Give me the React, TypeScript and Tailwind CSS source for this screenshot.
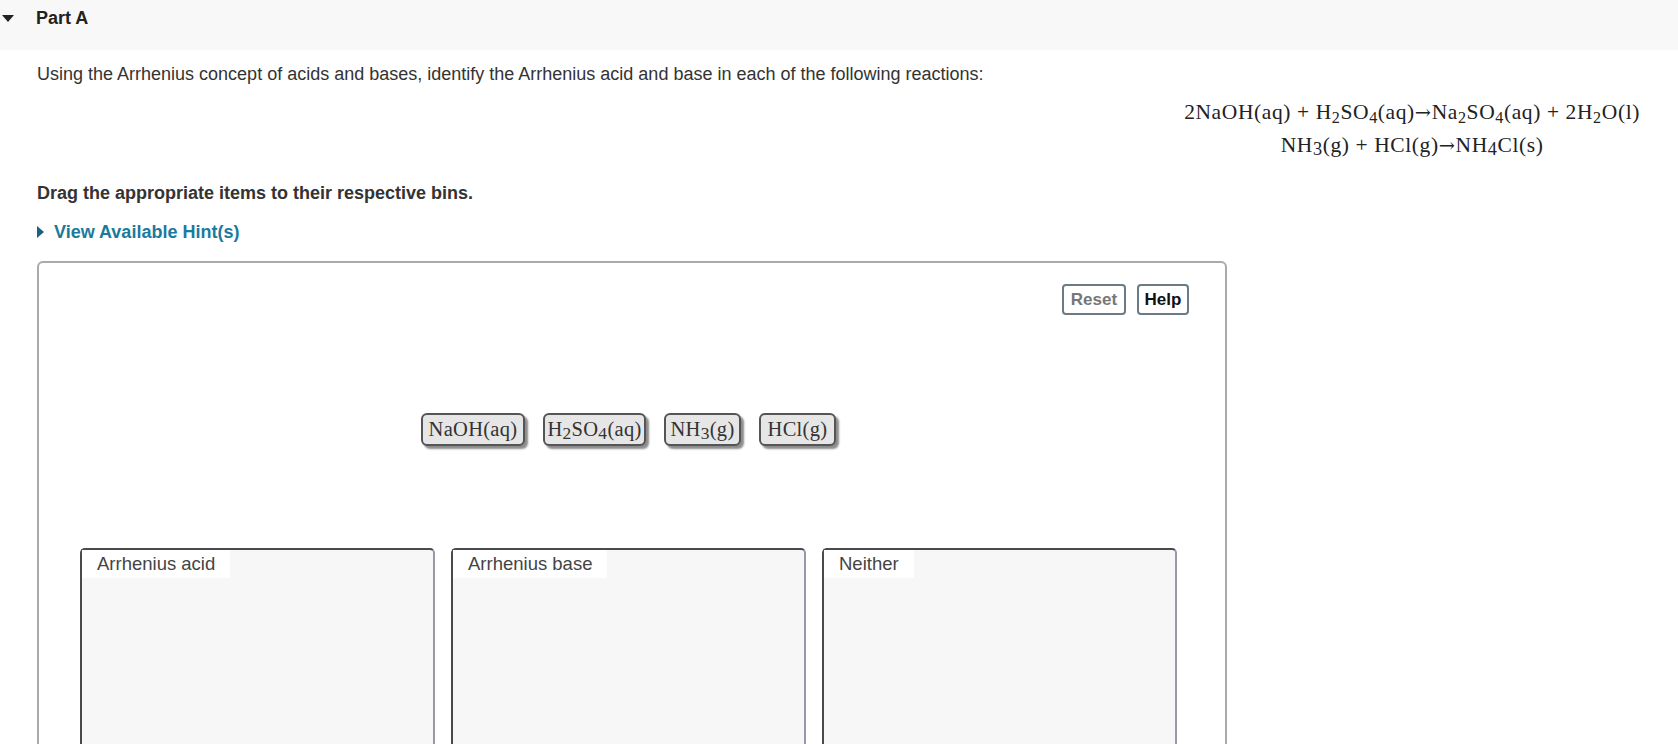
import React from "react";

const serif = { fontFamily: '"Liberation Serif", "Times New Roman", serif' };

function Chip({ children, w }: { children: React.ReactNode; w: string }) {
  return (
    <div
      className={`${w} h-[33px] flex items-center justify-center rounded-[6px] border-2 border-[#555558] bg-[#e6e6e6] text-[20.5px] tracking-[0.3px] text-[#333] shadow-[3px_3px_2px_rgba(0,0,0,0.45)]`}
      style={serif}
    >
      {children}
    </div>
  );
}

function Bin({ label }: { label: string }) {
  return (
    <div className="w-[355px] h-[260px] shrink-0 rounded-[5px] border-2 border-t-[#4a4a4c] border-l-[#4a4a4c] border-r-[#9a98a8] border-b-[#9a98a8] bg-[#f7f7f7]">
      <div className="inline-block h-[28px] bg-white px-[15px] text-[18.5px] leading-[28px] text-[#444]">
        {label}
      </div>
    </div>
  );
}

const Low = ({ children }: { children: React.ReactNode }) => (
  <span className="relative top-[3px] text-[0.85em]">{children}</span>
);

const Arrow = () => (
  <span style={{ fontFamily: '"DejaVu Serif", serif' }} className="text-[0.9em]">
    →
  </span>
);

export default function App() {
  return (
    <div
      className="w-full min-h-[744px] bg-white text-[#333] overflow-hidden"
      style={{ fontFamily: '"Liberation Sans", Arial, Helvetica, sans-serif' }}
    >
      {/* Header */}
      <div className="h-[50px] bg-[#f8f8f8]">
        <div className="flex h-[36px] items-center">
          <div className="ml-[2px] h-0 w-0 border-l-[6.5px] border-r-[6.5px] border-t-[7px] border-l-transparent border-r-transparent border-t-[#222]" />
          <div className="ml-[22px] text-[18px] font-bold text-[#222]">Part A</div>
        </div>
      </div>

      <div className="px-[37px]">
        <p className="mt-[12px] text-[18px] leading-[24px] text-[#333]">
          Using the Arrhenius concept of acids and bases, identify the Arrhenius acid and base in each of the following reactions:
        </p>

        <div className="mt-[10px] flex justify-end pr-[1px]">
          <div
            className="flex flex-col items-center text-[21.5px] leading-[33px] tracking-[0.6px] text-[#222]"
            style={serif}
          >
            <div>
              2NaOH(aq) + H<sub>2</sub>SO<sub>4</sub>(aq)<Arrow />Na<sub>2</sub>SO<sub>4</sub>(aq) + 2H<sub>2</sub>O(l)
            </div>
            <div>
              NH<Low>3</Low>(g) + HCl(g)<Arrow />NH<Low>4</Low>Cl(s)
            </div>
          </div>
        </div>

        <p className="mt-[18px] text-[18px] font-bold leading-[24px] text-[#333]">
          Drag the appropriate items to their respective bins.
        </p>

        <div className="mt-[15px] flex h-[24px] items-center">
          <div className="h-0 w-0 border-t-[6px] border-b-[6px] border-l-[7px] border-t-transparent border-b-transparent border-l-[#1d5f80]" />
          <span className="ml-[10px] text-[18px] font-bold text-[#1a7a9c]">View Available Hint(s)</span>
        </div>

        {/* Frame */}
        <div className="mt-[17px] w-[1190px] h-[520px] rounded-[6px] border-2 border-[#aaaaaa] bg-white">
          <div className="flex justify-end gap-[11px] pt-[21px] pr-[36px]">
            <button className="h-[31px] w-[64px] rounded-[4px] border-2 border-[#6b7a83] bg-white text-[17px] font-bold text-[#777]">
              Reset
            </button>
            <button className="h-[31px] w-[52px] rounded-[4px] border-2 border-[#6b7a83] bg-white text-[17px] font-bold text-[#111]">
              Help
            </button>
          </div>

          <div className="mt-[98px] flex justify-start gap-[18px] pl-[382px]">
            <Chip w="w-[104px]">NaOH(aq)</Chip>
            <Chip w="w-[103px]">
              <span>
                H<Low>2</Low>SO<Low>4</Low>(aq)
              </span>
            </Chip>
            <Chip w="w-[77px]">
              <span>
                NH<Low>3</Low>(g)
              </span>
            </Chip>
            <Chip w="w-[77px]">HCl(g)</Chip>
          </div>

          <div className="mt-[102px] flex gap-[16px] pl-[41px]">
            <Bin label="Arrhenius acid" />
            <Bin label="Arrhenius base" />
            <Bin label="Neither" />
          </div>
        </div>
      </div>
    </div>
  );
}
